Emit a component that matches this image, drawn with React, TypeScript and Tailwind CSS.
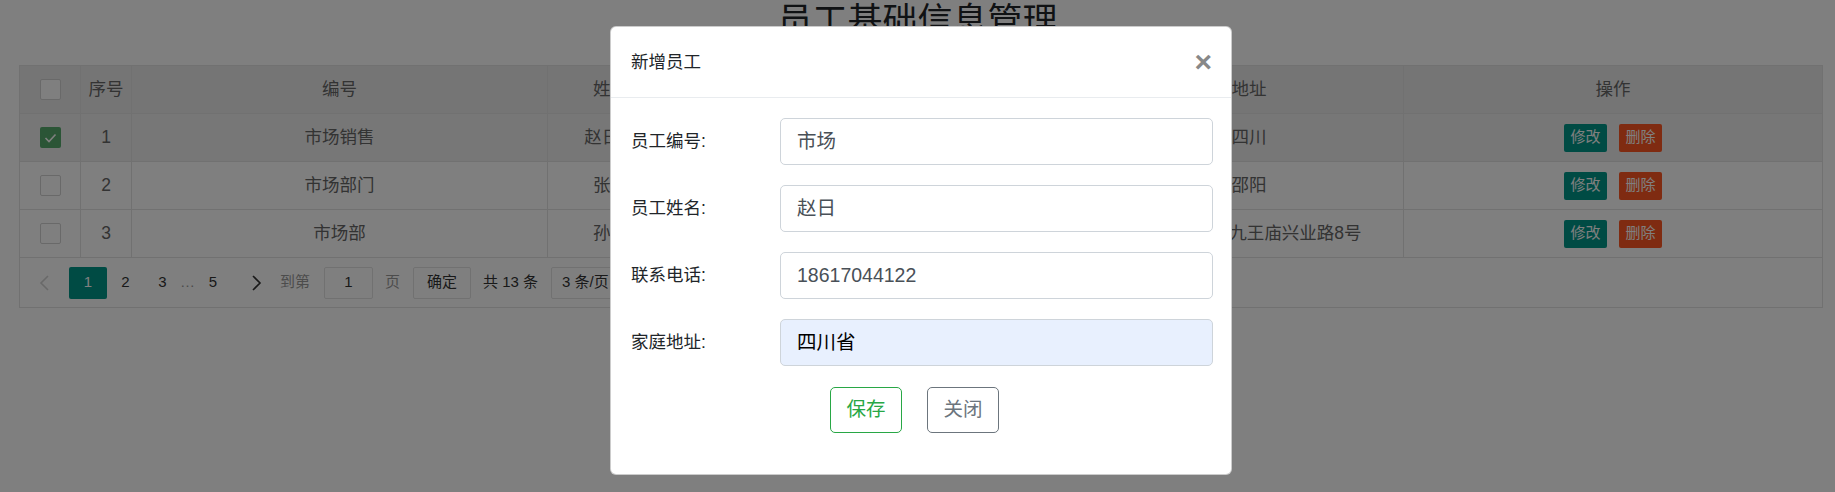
import * as React from "react";

const rows = [
  { id: 1, code: "市场销售", name: "赵日天", phone: "18617044122", addr: "中国四川", checked: true, shift: "" },
  { id: 2, code: "市场部门", name: "张三", phone: "13812345678", addr: "湖南邵阳", checked: false, shift: "" },
  { id: 3, code: "市场部", name: "孙悟", phone: "15973112233", addr: "湖南长沙市开福区九王庙兴业路8号", checked: false, shift: "pr-[12px]" },
];

const cell = "flex h-[48px] items-center justify-center border-b border-r border-[#e2e2e2] whitespace-nowrap";

function Checkbox({ checked }: { checked: boolean }) {
  if (checked) {
    return (
      <span className="flex h-[21px] w-[21px] items-center justify-center rounded-[2px] bg-[#56ab6c]">
        <svg width="13" height="10" viewBox="0 0 13 10" fill="none">
          <polyline points="1.5,5 5,8.5 11.5,1.5" stroke="white" strokeWidth="1.6" />
        </svg>
      </span>
    );
  }
  return <span className="h-[21px] w-[21px] rounded-[2px] border border-[#d2d2d2] bg-white" />;
}

function Chevron({ dir, color }: { dir: "left" | "right"; color: string }) {
  return (
    <svg width="11" height="16" viewBox="0 0 11 16" fill="none">
      <polyline
        points={dir === "left" ? "9,1 2,8 9,15" : "2,1 9,8 2,15"}
        stroke={color}
        strokeWidth="1.6"
      />
    </svg>
  );
}

function Pager() {
  return (
    <div className="flex h-[49px] items-center text-[15px] text-[#333]">
      <span className="flex h-[32px] w-[49px] items-center justify-center">
        <Chevron dir="left" color="#d2d2d2" />
      </span>
      <span className="flex h-[32px] w-[38px] items-center justify-center rounded-[2px] bg-[#009688] text-white">1</span>
      <span className="flex h-[32px] w-[37px] items-center justify-center">2</span>
      <span className="flex h-[32px] w-[37px] items-center justify-center">3</span>
      <span className="flex h-[32px] w-[13px] items-center justify-center text-[#999]">…</span>
      <span className="flex h-[32px] w-[38px] items-center justify-center">5</span>
      <span className="flex h-[32px] w-[48px] items-center justify-center">
        <Chevron dir="right" color="#333" />
      </span>
      <span className="text-[#999]">到第</span>
      <span className="ml-[14px] flex h-[32px] w-[49px] items-center justify-center rounded-[2px] border border-[#e2e2e2] bg-white">1</span>
      <span className="ml-[12px] text-[#999]">页</span>
      <span className="ml-[13px] flex h-[32px] w-[58px] items-center justify-center rounded-[2px] border border-[#e2e2e2] bg-white">确定</span>
      <span className="ml-[12px]">共 13 条</span>
      <span className="ml-[13px] flex h-[32px] w-[110px] items-center rounded-[2px] border border-[#e2e2e2] bg-white pl-[10px]">3 条/页</span>
    </div>
  );
}

function Field({ label, value, autofill }: { label: string; value: string; autofill?: boolean }) {
  return (
    <div className="mb-[20px] flex items-center">
      <label className="w-[149px] text-[17.5px] text-[#212529]">{label}</label>
      <div
        className={`flex h-[47px] flex-1 items-center rounded-[5px] border border-[#ced4da] px-[16px] text-[19.5px] ${
          autofill ? "bg-[#e8f0fe] text-black" : "bg-white text-[#495057]"
        }`}
      >
        {value}
      </div>
    </div>
  );
}

export default function App() {
  return (
    <div className="relative h-[492px] w-[1835px] overflow-hidden bg-white font-['Liberation_Sans','Noto_Sans_CJK_SC',sans-serif]">
      <h1 className="h-[42px] text-center text-[35px] leading-[42px] text-[#212529]">员工基础信息管理</h1>

      <div className="ml-[19px] mt-[23px] w-[1804px] border border-[#e2e2e2] text-[17.5px] text-[#666]">
        <div className="grid grid-cols-[61px_51px_416px_126px_386px_344px_418px]">
          <div className={`${cell} bg-[#ebebeb]`}>
            <Checkbox checked={false} />
          </div>
          <div className={`${cell} bg-[#ebebeb]`}>序号</div>
          <div className={`${cell} bg-[#ebebeb]`}>编号</div>
          <div className={`${cell} bg-[#ebebeb]`}>姓名</div>
          <div className={`${cell} bg-[#ebebeb]`}>联系电话</div>
          <div className={`${cell} bg-[#ebebeb]`}>家庭地址</div>
          <div className={`${cell} border-r-0 bg-[#ebebeb]`}>操作</div>

          {rows.map((r) => {
            const bg = r.checked ? "bg-[#efefef]" : "bg-white";
            return (
              <React.Fragment key={r.id}>
                <div className={`${cell} ${bg}`}>
                  <Checkbox checked={r.checked} />
                </div>
                <div className={`${cell} ${bg}`}>{r.id}</div>
                <div className={`${cell} ${bg}`}>{r.code}</div>
                <div className={`${cell} ${bg}`}>{r.name}</div>
                <div className={`${cell} ${bg}`}>{r.phone}</div>
                <div className={`${cell} ${bg} ${r.shift}`}>{r.addr}</div>
                <div className={`${cell} ${bg} gap-[12px] border-r-0 text-[15px]`}>
                  <span className="flex h-[28px] w-[43px] items-center justify-center rounded-[2px] bg-[#009688] text-white">修改</span>
                  <span className="flex h-[28px] w-[43px] items-center justify-center rounded-[2px] bg-[#ff5722] text-white">删除</span>
                </div>
              </React.Fragment>
            );
          })}
        </div>
        <Pager />
      </div>

      {/* backdrop */}
      <div className="absolute inset-0 bg-black/50" />

      {/* modal */}
      <div className="absolute left-[610px] top-[26px] w-[622px] rounded-[6px] border border-black/20 bg-white">
        <div className="flex h-[71px] items-center justify-between border-b border-[#e9ecef] pl-[20px] pr-[19px]">
          <span className="text-[17.5px] text-[#212529]">新增员工</span>
          <span className="font-['Liberation_Sans',sans-serif] text-[30px] font-bold leading-none text-[#888]">×</span>
        </div>
        <div className="pb-[41px] pl-[20px] pr-[18px] pt-[20px]">
          <Field label="员工编号:" value="市场" />
          <Field label="员工姓名:" value="赵日" />
          <Field label="联系电话:" value="18617044122" />
          <Field label="家庭地址:" value="四川省" autofill />
          <div className="mt-[21px] flex justify-center gap-[25px] pr-[15px] text-[19.5px]">
            <span className="flex h-[46px] w-[72px] items-center justify-center rounded-[5px] border border-[#28a745] text-[#28a745]">保存</span>
            <span className="flex h-[46px] w-[72px] items-center justify-center rounded-[5px] border border-[#6c757d] text-[#6c757d]">关闭</span>
          </div>
        </div>
      </div>
    </div>
  );
}
